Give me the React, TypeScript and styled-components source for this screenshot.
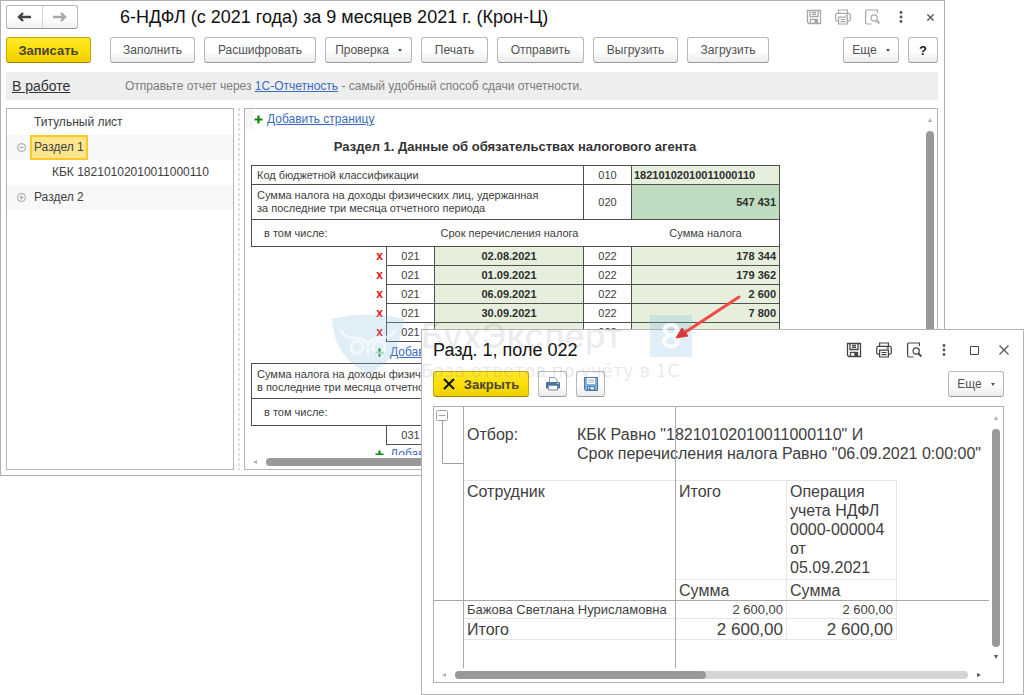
import React from "react";
import styled, { createGlobalStyle, css } from "styled-components";

const GlobalStyle = createGlobalStyle`
  * { box-sizing: border-box; }
  body {
    margin: 0;
    background: #fff;
    color: #404040;
    font-family: "Liberation Sans", Arial, sans-serif;
    font-size: 13px;
  }
  button { font-family: inherit; cursor: pointer; }
`;

const Desktop = styled.div`
  position: relative;
  min-height: 100vh;
  overflow: hidden;
`;

/* ---------- windows ---------- */

const MainWindow = styled.main`
  margin-right: 79px;
  padding: 4px 6px 5px 5px;
  border: 1px solid #b0b0b0;
  background: #fff;
`;

const PopupWindow = styled.section`
  position: absolute;
  left: 421px;
  right: 0;
  top: 329px;
  padding: 8px 19px 11px 11px;
  border: 1px solid #b4b4b4;
  background: #fff;
`;

const TitleBar = styled.header`
  display: flex;
  align-items: center;
`;

const WindowTitle = styled.h1<{ $indent?: number }>`
  flex: 1;
  margin: 0 0 0 ${(p) => p.$indent ?? 0}px;
  color: #111;
  font-size: 18px;
  font-weight: 400;
  line-height: 24px;
  white-space: nowrap;
`;

const WindowTools = styled.div<{ $faded?: boolean }>`
  display: flex;
  gap: ${(p) => (p.$faded ? 13 : 14)}px;
  margin-right: ${(p) => (p.$faded ? 0 : -8)}px;
  color: ${(p) => (p.$faded ? "#a8a8a8" : "#444")};
`;

const IconButton = styled.button`
  display: flex;
  align-items: center;
  justify-content: center;
  width: 16px;
  height: 24px;
  padding: 0;
  border: 0;
  background: none;
  color: inherit;
`;

const NavButtons = styled.div`
  display: flex;
  width: 72px;
  height: 24px;
  border: 1px solid #b8b8b8;
  border-bottom-color: #999;
  border-radius: 3px;
  background: linear-gradient(#fff 50%, #f0f0f0);
`;

const NavButton = styled.button`
  display: flex;
  flex: 1;
  align-items: center;
  justify-content: center;
  padding: 0;
  border: 0;
  background: none;
  color: #444;
  & + & {
    border-left: 1px solid #d4d4d4;
    color: #a8a8a8;
  }
`;

const Toolbar = styled.div<{ $top: number }>`
  display: flex;
  gap: 9px;
  margin-top: ${(p) => p.$top}px;
`;

const Spacer = styled.div`
  flex: 1;
`;

const Button = styled.button<{ $width: number; $primary?: boolean; $after?: number }>`
  display: flex;
  align-items: center;
  justify-content: center;
  gap: 9px;
  width: ${(p) => p.$width}px;
  height: 26px;
  margin-right: ${(p) => p.$after ?? 0}px;
  padding: 0;
  border: 1px solid #b8b8b8;
  border-bottom: 1px solid #999;
  border-radius: 3px;
  background: linear-gradient(#fff 50%, #ececec);
  color: #505050;
  font-size: 12px;
  white-space: nowrap;
  ${(p) =>
    p.$primary &&
    css`
      border-color: #c9a800;
      border-bottom-color: #a08600;
      background: linear-gradient(#ffe92e, #fbdc00 60%, #efcf00);
      color: #4a4433;
      font-size: 13px;
      font-weight: 700;
    `}
`;

const Caret = styled.span`
  width: 0;
  border: 2px solid transparent;
  border-top: 3px solid #555;
  border-bottom: 0;
`;

const HelpMark = styled.span`
  color: #222;
  font-size: 13px;
  font-weight: 700;
`;

/* ---------- status strip ---------- */

const StatusStrip = styled.div`
  display: flex;
  align-items: center;
  height: 28px;
  margin-top: 9px;
  padding-left: 6px;
  background: #eee;
  color: #7c7c7c;
  font-size: 12px;
`;

const StatusLink = styled.a`
  width: 113px;
  color: #333;
  font-size: 14px;
`;

const Link = styled.a`
  color: #3c6cc0;
`;

/* ---------- report body ---------- */

const Panes = styled.div`
  display: flex;
  height: 362px;
  margin-top: 8px;
`;

const TreePane = styled.nav`
  width: 228px;
  padding-top: 1px;
  border: 1px solid #b4b4b4;
`;

const Splitter = styled.div`
  width: 10px;
  background: repeating-linear-gradient(#e0e0e0 0 3px, transparent 3px 5px) 4px 0 / 2px 100% no-repeat;
`;

const TreeRow = styled.div<{ $level?: number; $shaded?: boolean }>`
  display: flex;
  align-items: center;
  height: 25px;
  padding-left: ${(p) => (p.$level ? 18 : 0)}px;
  background: ${(p) => (p.$shaded ? "#f8f8f8" : "transparent")};
`;

const TreeToggle = styled.button`
  display: flex;
  justify-content: center;
  width: 23px;
  padding: 0 0 0 5px;
  border: 0;
  background: none;
`;

const TreeLabel = styled.span<{ $selected?: boolean }>`
  padding: 0 2px;
  border: 2px solid ${(p) => (p.$selected ? "#fbc828" : "transparent")};
  background: ${(p) => (p.$selected ? "#fde58e" : "transparent")};
  font-size: 12px;
  line-height: 21px;
`;

const ReportPane = styled.section`
  display: flex;
  flex: 1;
  flex-direction: column;
  min-width: 0;
  border: 1px solid #b4b4b4;
`;

const ReportArea = styled.div`
  display: flex;
  flex: 1;
  min-height: 0;
`;

const Report = styled.div`
  flex: 1;
  min-width: 0;
  overflow: hidden;
`;

const AddPage = styled.div`
  display: flex;
  align-items: center;
  gap: 4px;
  height: 20px;
  font-size: 12px;
`;

const Corner = styled.div`
  width: 9px;
  height: 20px;
  margin-right: -4px;
  background: #f6f6f6;
`;

const ReportTitle = styled.h2`
  width: 528px;
  margin: 10px 0 11px 6px;
  color: #333;
  font-size: 13px;
  line-height: 15px;
  text-align: center;
`;

const ReportTable = styled.table`
  width: 529px;
  margin-left: 6px;
  border-spacing: 0;
  table-layout: fixed;
  font-size: 11px;
  line-height: 13px;
`;

type CellProps = {
  $h: number;
  $lines?: string;
  $tone?: "light" | "dark";
  $align?: "left" | "center" | "right";
  $pad?: number;
};

const lineCss: Record<string, string> = {
  l: "border-left: 1px solid #505050;",
  r: "border-right: 1px solid #505050;",
  t: "border-top: 1px solid #505050;",
  b: "border-bottom: 1px solid #505050;",
};

const Cell = styled.td<CellProps>`
  height: ${(p) => p.$h}px;
  padding: 0 ${(p) => (p.$align === "right" ? 3 : 0)}px 0 ${(p) => p.$pad ?? 0}px;
  background: ${(p) => (p.$tone === "dark" ? "#bfdcc0" : p.$tone === "light" ? "#e5efdc" : "transparent")};
  color: ${(p) => (p.$tone ? "#2e2e2e" : "#404040")};
  font-weight: ${(p) => (p.$tone ? 700 : 400)};
  text-align: ${(p) => p.$align ?? "left"};
  white-space: nowrap;
  ${(p) => (p.$lines ?? "rb").split("").map((k) => lineCss[k])}
`;

const DeleteButton = styled.button`
  display: block;
  margin-left: auto;
  padding: 0 3px 0 0;
  border: 0;
  background: none;
  color: #f01010;
  font-size: 12px;
  font-weight: 700;
  line-height: 15px;
`;

const AddSign = styled.div`
  display: flex;
  justify-content: flex-end;
  padding-right: 3px;
`;

const AddLink = styled(Link)`
  font-size: 12px;
`;

/* ---------- scroll bars ---------- */

const VScroll = styled.div<{ $end?: number }>`
  display: flex;
  flex-direction: column;
  align-items: center;
  width: 14px;
  padding: 9px 0 ${(p) => p.$end ?? 0}px;
`;

const HScroll = styled.div<{ $end?: number }>`
  display: flex;
  align-items: center;
  height: 14px;
  padding: 0 ${(p) => p.$end ?? 0}px 0 8px;
`;

const VThumb = styled.div`
  flex: 1;
  width: 8px;
  margin: 9px 0 8px;
  border-radius: 4px;
  background: #999;
`;

const HTrack = styled.div`
  flex: 1;
  height: 8px;
  margin: 0 9px;
  border-radius: 4px;
  background: #d4d4d4;
`;

const HThumb = styled.div<{ $size: string }>`
  width: ${(p) => p.$size};
  height: 8px;
  border-radius: 4px;
  background: #999;
`;

/* ---------- details sheet ---------- */

const Sheet = styled.div`
  display: flex;
  flex-direction: column;
  margin-top: 9px;
  border: 1px solid #b0b0b0;
`;

const SheetArea = styled.div`
  display: flex;
  height: 261px;
`;

const Canvas = styled.div`
  position: relative;
  display: flex;
  flex: 1;
  min-width: 0;
  &::before {
    content: "";
    position: absolute;
    left: 241px;
    top: 0;
    bottom: 0;
    border-left: 1px solid #a8a8a8;
  }
  &::after {
    content: "";
    position: absolute;
    left: 0;
    right: 0;
    top: 193px;
    border-top: 1px solid #a8a8a8;
  }
`;

const Outline = styled.div`
  width: 30px;
  border-right: 1px solid #a8a8a8;
`;

const SheetContent = styled.div`
  flex: 1;
  min-width: 0;
  font-size: 16px;
  line-height: 19px;
`;

const Filter = styled.dl`
  display: flex;
  height: 73px;
  margin: 0;
  padding: 18px 0 0 3px;
  white-space: nowrap;
`;

const FilterName = styled.dt`
  width: 110px;
`;

const FilterValue = styled.dd`
  margin: 0;
`;

const DetailTable = styled.table`
  width: 433px;
  border-spacing: 0;
  table-layout: fixed;
`;

const detailCell = css<{ $h: number; $num?: boolean; $small?: boolean; $noTop?: boolean }>`
  height: ${(p) => p.$h}px;
  padding: 1px 3px 0;
  border-top: 1px solid ${(p) => (p.$noTop ? "transparent" : "#e6e6e6")};
  border-right: 1px solid #e6e6e6;
  font-size: ${(p) => (p.$small ? 13 : p.$num ? 17 : 16)}px;
  font-weight: 400;
  line-height: ${(p) => (p.$small ? 15 : 19)}px;
  text-align: ${(p) => (p.$num ? "right" : "left")};
  vertical-align: top;
  white-space: pre-line;
`;

const HeadCell = styled.th`
  ${detailCell}
`;

const DataCell = styled.td`
  ${detailCell}
  white-space: nowrap;
  tr:last-child > & {
    border-bottom: 1px solid #e6e6e6;
  }
`;

/* ---------- overlays ---------- */

const Watermark = styled.div`
  position: absolute;
  left: 332px;
  top: 314px;
  display: flex;
  pointer-events: none;
`;

const Shield = styled.svg`
  margin-right: 15px;
`;

const BrandRow = styled.div`
  display: flex;
  align-items: center;
  height: 44px;
  gap: 13px;
`;

const Brand = styled.div`
  width: 216px;
  color: rgba(110, 110, 130, 0.14);
  font-family: Inter, sans-serif;
  font-size: 34px;
  font-weight: 500;
  line-height: 40px;
`;

const BrandBadge = styled.div`
  width: 42px;
  height: 42px;
  background: rgba(120, 185, 220, 0.24);
  color: rgba(255, 255, 255, 0.85);
  font-family: Inter, sans-serif;
  font-size: 34px;
  font-weight: 600;
  line-height: 42px;
  text-align: center;
`;

const Slogan = styled.div`
  padding-top: 3px;
  color: rgba(110, 110, 130, 0.16);
  font-family: "DejaVu Sans", sans-serif;
  font-size: 18px;
  line-height: 20px;
  white-space: nowrap;
`;

const Pointer = styled.svg`
  position: absolute;
  left: 670px;
  top: 290px;
  pointer-events: none;
`;

/* ---------- icons ---------- */

const SaveIcon = () => (
  <svg width="16" height="16" viewBox="0 0 16 16" fill="none" stroke="currentColor" strokeWidth="1.3">
    <path d="M1.5 1.5h13v13H2.8L1.5 13.2z" />
    <path d="M4 1.5v6h8v-6M6 3.5h4M6 5.4h4" />
    <path d="M4.5 14.5v-4.2h7v4.2" />
    <path d="M9 11.5h1.6v2H9z" fill="currentColor" />
  </svg>
);

const PrintIcon = () => (
  <svg width="16" height="16" viewBox="0 0 16 16" fill="none" stroke="currentColor" strokeWidth="1.2">
    <path d="M3.6 4.2V1h8.8v3.2" />
    <path d="M3.5 12.2H2.4A1.7 1.7 0 0 1 .7 10.5V6a1.7 1.7 0 0 1 1.7-1.7h11.2A1.7 1.7 0 0 1 15.3 6v4.5a1.7 1.7 0 0 1-1.7 1.7h-1.1" />
    <path d="M3.6 8.2h8.8V15H3.6zM5.5 10.5h5M5.5 12.7h5M10.5 6.2h2.5" />
  </svg>
);

const PreviewIcon = () => (
  <svg width="16" height="16" viewBox="0 0 16 16" fill="none" stroke="currentColor" strokeWidth="1.2">
    <path d="M13.4 4V1H2.4Q1.6 1 1.6 2v11.5Q1.6 15 3 15h4.5" />
    <circle cx="10.2" cy="9" r="3.1" />
    <path d="M12.3 11.3l3 3.2" strokeWidth="1.9" />
  </svg>
);

const DotsIcon = () => (
  <svg width="4" height="12" viewBox="0 0 4 12" fill="#555">
    <circle cx="2" cy="1.5" r="1.4" />
    <circle cx="2" cy="6" r="1.4" />
    <circle cx="2" cy="10.5" r="1.4" />
  </svg>
);

const CrossIcon = ({ size }: { size: number }) => (
  <svg width={size} height={size} viewBox="0 0 10 10" fill="none" stroke="#555" strokeWidth={size > 8 ? 1.2 : 1.9}>
    <path d="M.5.5l9 9M9.5.5l-9 9" />
  </svg>
);

const ArrowIcon = ({ flip }: { flip?: boolean }) => (
  <svg width="14" height="10" viewBox="0 0 14 10" fill="none" stroke="currentColor" strokeWidth="2.4">
    <path d={flip ? "M0 5h12M8 1l4 4-4 4" : "M14 5H2M6 1L2 5l4 4"} />
  </svg>
);

const Triangle = ({ dir, color }: { dir: "up" | "down" | "left" | "right"; color: string }) => {
  const shapes = { up: "0,4 4,4 2,0", down: "0,0 4,0 2,4", left: "4,0 4,4 0,2", right: "0,0 0,4 4,2" };
  return (
    <svg width="4" height="4" viewBox="0 0 4 4">
      <polygon points={shapes[dir]} fill={color} />
    </svg>
  );
};

const Plus = () => (
  <svg width="9" height="9" viewBox="0 0 9 9" stroke="#0a8a0a" strokeWidth="2.2">
    <path d="M4.5.5v8M.5 4.5h8" />
  </svg>
);

const ToggleIcon = ({ open }: { open?: boolean }) => (
  <svg width="9" height="9" viewBox="0 0 9 9" fill="none" stroke="#a0a0a0">
    <circle cx="4.5" cy="4.5" r="4" />
    <path d={open ? "M2.5 4.5h4" : "M2.5 4.5h4M4.5 2.5v4"} />
  </svg>
);

const BluePrinter = () => (
  <svg width="16" height="16" viewBox="0 0 16 16">
    <path d="M4.5 6V1.500h5L12 4v2" fill="#fff" stroke="#8a9db5" />
    <rect x="1" y="6" width="14" height="6.5" rx="1" fill="#4b749f" />
    <path d="M3.5 9.500h9V14h-9z" fill="#fff" stroke="#6c8fb3" />
    <path d="M12 7.500h1.500" stroke="#dce8f4" />
  </svg>
);

const BlueFloppy = () => (
  <svg width="16" height="16" viewBox="0 0 16 16">
    <path d="M1.5 1.500h13v13h-12l-1-1z" fill="#85add6" stroke="#4678ad" />
    <path d="M4 2h8v6H4z" fill="#fff" />
    <path d="M5 4h6M5 6h6" stroke="#9ab3cc" />
    <path d="M4.500 10.500h7V14h-7z" fill="#dbe8f3" stroke="#4678ad" />
    <path d="M6 11.500h1.500V14H6z" fill="#3f6c9c" />
  </svg>
);

/* ---------- data ---------- */

const commands: { label: string; width: number; menu?: boolean }[] = [
  { label: "Заполнить", width: 85 },
  { label: "Расшифровать", width: 112 },
  { label: "Проверка", width: 87, menu: true },
  { label: "Печать", width: 67 },
  { label: "Отправить", width: 87 },
  { label: "Выгрузить", width: 85 },
  { label: "Загрузить", width: 82 },
];

const payments = [
  { date: "02.08.2021", sum: "178 344" },
  { date: "01.09.2021", sum: "179 362" },
  { date: "06.09.2021", sum: "2 600" },
  { date: "30.09.2021", sum: "7 800" },
  { date: "", sum: "" },
];

const AddRow = ({ height, lines }: { height: number; lines: string }) => (
  <tr>
    <Cell $h={height} $lines={lines}>
      <AddSign>
        <Plus />
      </AddSign>
    </Cell>
    <Cell $h={height} $lines={lines} $pad={3} colSpan={4}>
      <AddLink href="#add">Добавить</AddLink>
    </Cell>
  </tr>
);

export default function App() {
  return (
    <Desktop>
      <GlobalStyle />
      <MainWindow>
        <TitleBar>
          <NavButtons>
            <NavButton aria-label="Назад">
              <ArrowIcon />
            </NavButton>
            <NavButton aria-label="Вперед">
              <ArrowIcon flip />
            </NavButton>
          </NavButtons>
          <WindowTitle $indent={42}>6-НДФЛ (с 2021 года) за 9 месяцев 2021 г. (Крон-Ц)</WindowTitle>
          <WindowTools $faded>
            <IconButton aria-label="Сохранить"><SaveIcon /></IconButton>
            <IconButton aria-label="Печать"><PrintIcon /></IconButton>
            <IconButton aria-label="Просмотр"><PreviewIcon /></IconButton>
            <IconButton aria-label="Меню"><DotsIcon /></IconButton>
            <IconButton aria-label="Закрыть"><CrossIcon size={7} /></IconButton>
          </WindowTools>
        </TitleBar>

        <Toolbar $top={8}>
          <Button $width={85} $primary $after={10}>Записать</Button>
          {commands.map((c) => (
            <Button key={c.label} $width={c.width}>
              {c.label}
              {c.menu && <Caret />}
            </Button>
          ))}
          <Spacer />
          <Button $width={56}>
            Еще
            <Caret />
          </Button>
          <Button $width={30} aria-label="Справка">
            <HelpMark>?</HelpMark>
          </Button>
        </Toolbar>

        <StatusStrip>
          <StatusLink href="#status">В работе</StatusLink>
          <span>
            Отправьте отчет через <Link href="#report">1С-Отчетность</Link> - самый удобный способ сдачи отчетности.
          </span>
        </StatusStrip>

        <Panes>
          <TreePane>
            <TreeRow>
              <TreeToggle as="span" />
              <TreeLabel>Титульный лист</TreeLabel>
            </TreeRow>
            <TreeRow $shaded>
              <TreeToggle aria-label="Свернуть"><ToggleIcon open /></TreeToggle>
              <TreeLabel $selected>Раздел 1</TreeLabel>
            </TreeRow>
            <TreeRow $level={1}>
              <TreeToggle as="span" />
              <TreeLabel>КБК 18210102010011000110</TreeLabel>
            </TreeRow>
            <TreeRow $shaded>
              <TreeToggle aria-label="Развернуть"><ToggleIcon /></TreeToggle>
              <TreeLabel>Раздел 2</TreeLabel>
            </TreeRow>
          </TreePane>
          <Splitter />
          <ReportPane>
            <ReportArea>
              <Report>
                <AddPage>
                  <Corner />
                  <Plus />
                  <Link href="#page">Добавить страницу</Link>
                </AddPage>
                <ReportTitle>Раздел 1. Данные об обязательствах налогового агента</ReportTitle>
                <ReportTable>
                  <colgroup>
                    <col style={{ width: 136 }} />
                    <col style={{ width: 48 }} />
                    <col style={{ width: 149 }} />
                    <col style={{ width: 48 }} />
                    <col style={{ width: 148 }} />
                  </colgroup>
                  <tbody>
                    <tr>
                      <Cell $h={20} $lines="lrtb" $pad={5} colSpan={3}>Код бюджетной классификации</Cell>
                      <Cell $h={20} $lines="rtb" $align="center">010</Cell>
                      <Cell $h={20} $lines="rtb" $tone="light" $pad={2}>18210102010011000110</Cell>
                    </tr>
                    <tr>
                      <Cell $h={35} $lines="lrb" $pad={5} colSpan={3}>
                        Сумма налога на доходы физических лиц, удержанная
                        <br />
                        за последние три месяца отчетного периода
                      </Cell>
                      <Cell $h={35} $align="center">020</Cell>
                      <Cell $h={35} $tone="dark" $align="right">547 431</Cell>
                    </tr>
                    <tr>
                      <Cell $h={27} $lines="lb" $pad={12} colSpan={2}>в том числе:</Cell>
                      <Cell $h={27} $lines="b" $align="center">Срок перечисления налога</Cell>
                      <Cell $h={27} $lines="b" />
                      <Cell $h={27} $lines="rb" $align="center">Сумма налога</Cell>
                    </tr>
                    {payments.map((p, i) => (
                      <tr key={i}>
                        <Cell $h={19} $lines="r">
                          <DeleteButton aria-label="Удалить строку">x</DeleteButton>
                        </Cell>
                        <Cell $h={19} $align="center">021</Cell>
                        <Cell $h={19} $tone="light" $align="center">{p.date}</Cell>
                        <Cell $h={19} $align="center">022</Cell>
                        <Cell $h={19} $tone="light" $align="right">{p.sum}</Cell>
                      </tr>
                    ))}
                    <AddRow height={22} lines="b" />
                    <tr>
                      <Cell $h={35} $lines="lrb" $pad={5} colSpan={3}>
                        Сумма налога на доходы физических лиц, возвращенная
                        <br />
                        в последние три месяца отчетного периода
                      </Cell>
                      <Cell $h={35} $align="center">030</Cell>
                      <Cell $h={35} $tone="dark" />
                    </tr>
                    <tr>
                      <Cell $h={27} $lines="lrb" $pad={12} colSpan={5}>в том числе:</Cell>
                    </tr>
                    <tr>
                      <Cell $h={19} $lines="r" />
                      <Cell $h={19} $align="center">031</Cell>
                      <Cell $h={19} $tone="light" />
                      <Cell $h={19} $align="center">032</Cell>
                      <Cell $h={19} $tone="light" />
                    </tr>
                    <AddRow height={19} lines="" />
                  </tbody>
                </ReportTable>
              </Report>
              <VScroll>
                <Triangle dir="up" color="#b0b0b0" />
                <VThumb />
              </VScroll>
            </ReportArea>
            <HScroll>
              <Triangle dir="left" color="#b0b0b0" />
              <HTrack>
                <HThumb $size="60%" />
              </HTrack>
            </HScroll>
          </ReportPane>
        </Panes>
      </MainWindow>

      <PopupWindow>
        <TitleBar>
          <WindowTitle as="h2">Разд. 1, поле 022</WindowTitle>
          <WindowTools>
            <IconButton aria-label="Сохранить"><SaveIcon /></IconButton>
            <IconButton aria-label="Печать"><PrintIcon /></IconButton>
            <IconButton aria-label="Просмотр"><PreviewIcon /></IconButton>
            <IconButton aria-label="Меню"><DotsIcon /></IconButton>
            <IconButton aria-label="Развернуть">
              <svg width="9" height="9" viewBox="0 0 9 9" fill="none" stroke="#444">
                <path d="M.5.5h8v8h-8z" />
              </svg>
            </IconButton>
            <IconButton aria-label="Закрыть окно"><CrossIcon size={10} /></IconButton>
          </WindowTools>
        </TitleBar>
        <Toolbar $top={9}>
          <Button $width={96} $primary>
            <svg width="12" height="12" viewBox="0 0 12 12" stroke="#111" strokeWidth="2">
              <path d="M1 1l10 10M11 1L1 11" />
            </svg>
            Закрыть
          </Button>
          <Button $width={29} aria-label="Печать таблицы"><BluePrinter /></Button>
          <Button $width={29} aria-label="Сохранить таблицу"><BlueFloppy /></Button>
          <Spacer />
          <Button $width={56}>
            Еще
            <Caret />
          </Button>
        </Toolbar>
        <Sheet>
          <SheetArea>
            <Canvas>
              <Outline>
                <svg width="30" height="60" viewBox="0 0 30 60" fill="none" stroke="#a0a0a0">
                  <rect x="2.5" y="3.5" width="11" height="10" rx="1" />
                  <path d="M4.5 8.500h7" />
                  <path d="M8.500 14v42.500H30" />
                </svg>
              </Outline>
              <SheetContent>
                <Filter>
                  <FilterName>Отбор:</FilterName>
                  <FilterValue>
                    КБК Равно "18210102010011000110" И
                    <br />
                    Срок перечисления налога Равно "06.09.2021 0:00:00"
                  </FilterValue>
                </Filter>
                <DetailTable>
                  <colgroup>
                    <col style={{ width: 212 }} />
                    <col style={{ width: 111 }} />
                    <col style={{ width: 110 }} />
                  </colgroup>
                  <thead>
                    <tr>
                      <HeadCell $h={120} rowSpan={2}>Сотрудник</HeadCell>
                      <HeadCell $h={99}>Итого</HeadCell>
                      <HeadCell $h={99}>{"Операция\nучета НДФЛ\n0000-000004\nот\n05.09.2021"}</HeadCell>
                    </tr>
                    <tr>
                      <HeadCell $h={21}>Сумма</HeadCell>
                      <HeadCell $h={21}>Сумма</HeadCell>
                    </tr>
                  </thead>
                  <tbody>
                    <tr>
                      <DataCell $h={18} $small $noTop>Бажова Светлана Нурисламовна</DataCell>
                      <DataCell $h={18} $small $num $noTop>2 600,00</DataCell>
                      <DataCell $h={18} $small $num $noTop>2 600,00</DataCell>
                    </tr>
                    <tr>
                      <DataCell $h={22}>Итого</DataCell>
                      <DataCell $h={22} $num>2 600,00</DataCell>
                      <DataCell $h={22} $num>2 600,00</DataCell>
                    </tr>
                  </tbody>
                </DetailTable>
              </SheetContent>
            </Canvas>
            <VScroll $end={9}>
              <Triangle dir="up" color="#b0b0b0" />
              <VThumb />
              <Triangle dir="down" color="#555" />
            </VScroll>
          </SheetArea>
          <HScroll $end={22}>
            <Triangle dir="left" color="#b0b0b0" />
            <HTrack>
              <HThumb $size="49%" />
            </HTrack>
            <Triangle dir="right" color="#555" />
          </HScroll>
        </Sheet>
      </PopupWindow>

      <Watermark aria-hidden="true">
        <Shield width="74" height="62" viewBox="0 0 74 62">
          <path d="M0 5Q36-4 72 5Q70 26 61 40Q52 52 37 60Q20 52 10 38Q1 24 0 5Z" fill="#78b9dc" fillOpacity=".24" />
          <g fill="none" stroke="#fff" strokeOpacity=".6">
            <path d="M8 16Q14 25 26 24Q34 25 36 31Q38 25 46 24Q58 25 64 16" strokeWidth="3" />
            <circle cx="25" cy="33" r="6" strokeWidth="3" />
            <circle cx="47" cy="33" r="6" strokeWidth="3" />
          </g>
          <path d="M33 34h6l-3 9z" fill="#fff" fillOpacity=".6" />
        </Shield>
        <div>
          <BrandRow>
            <Brand>БухЭксперт</Brand>
            <BrandBadge>8</BrandBadge>
          </BrandRow>
          <Slogan>База ответов по учёту в 1С</Slogan>
        </div>
      </Watermark>

      <Pointer width="76" height="54" viewBox="0 0 76 54">
        <path d="M69 7L14 43" stroke="#f24848" strokeWidth="3" strokeLinecap="round" />
        <path d="M6 48l6-10 6 8z" fill="#d83a3a" stroke="#d83a3a" />
      </Pointer>
    </Desktop>
  );
}
